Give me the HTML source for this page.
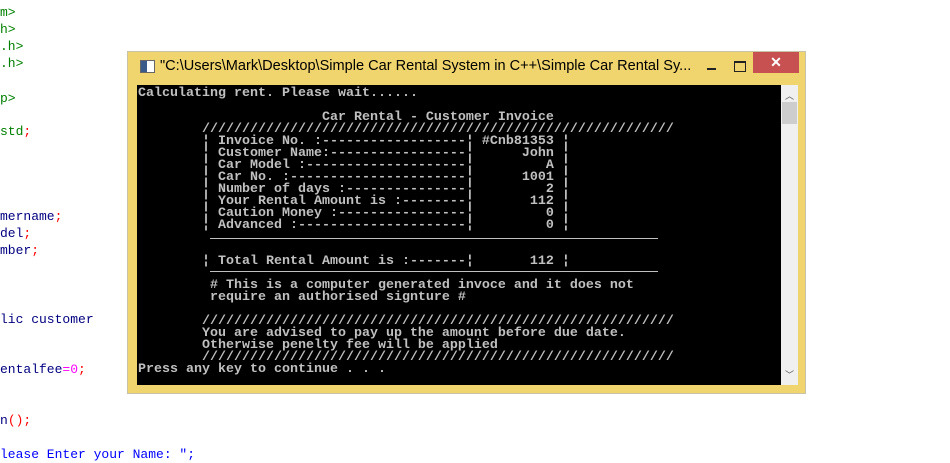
<!DOCTYPE html>
<html><head><meta charset="utf-8"><style>
body{margin:0;width:950px;height:460px;background:#fff;position:relative;overflow:hidden;font-family:"Liberation Mono",monospace}
.c{position:absolute;left:0;font-size:13px;line-height:17px;white-space:pre;color:#000080}
.g{color:#008000}.r{color:#ff0000}.m{color:#ff00ff}.b{color:#0000ff}
#win{position:absolute;left:128px;top:52px;width:677px;height:341px;background:#f0d46e;box-shadow:0 0 0 1px #c8c2a8}
#title{position:absolute;left:32px;top:5px;font-family:"Liberation Sans",sans-serif;font-size:15px;color:#000;white-space:nowrap;transform:scaleX(0.97);transform-origin:left}
#con{position:absolute;left:9px;top:33px;width:644px;height:300px;background:#000;overflow:hidden}
pre{margin:0;position:absolute;left:1px;top:3px;font-family:"Liberation Mono",monospace;font-size:13.33px;line-height:12px;color:#c0c0c0;font-weight:bold}
.hl{position:absolute;height:1px;background:#c0c0c0;left:73px;width:448px}
#sb{position:absolute;left:653px;top:33px;width:17px;height:300px;background:#f0f0f0}
</style></head><body>
<div class="c g" style="top:4px">m&gt;</div>
<div class="c g" style="top:21px">h&gt;</div>
<div class="c g" style="top:38px">.h&gt;</div>
<div class="c g" style="top:55px">.h&gt;</div>
<div class="c g" style="top:90px">p&gt;</div>
<div class="c" style="top:123px"><span class="g">std</span><span class="r">;</span></div>
<div class="c" style="top:208px">mername<span class="r">;</span></div>
<div class="c" style="top:225px">del<span class="r">;</span></div>
<div class="c" style="top:242px">mber<span class="r">;</span></div>
<div class="c" style="top:311px">lic customer</div>
<div class="c" style="top:361px">entalfee<span class="m">=0</span><span class="r">;</span></div>
<div class="c" style="top:412px">n<span class="r">();</span></div>
<div class="c b" style="top:446px">lease Enter your Name: ";</div>

<div id="win">
 <div style="position:absolute;left:12px;top:8px;width:15px;height:13px;background:#fff;border:1px solid #666;box-sizing:border-box"><div style="width:6px;height:11px;background:#3a5a8c"></div></div>
 <div id="title">"C:\Users\Mark\Desktop\Simple Car Rental System in C++\Simple Car Rental Sy...</div>
 <div style="position:absolute;left:579px;top:16px;width:9px;height:2px;background:#222"></div>
 <div style="position:absolute;left:606px;top:9px;width:10px;height:8px;border:1px solid #222;border-top-width:2px"></div>
 <div style="position:absolute;left:625px;top:0;width:46px;height:21px;background:#c75050;color:#fff;font-family:'Liberation Sans',sans-serif;font-size:14px;font-weight:bold;text-align:center;line-height:21px">✕</div>
 <div id="con">
<pre>Calculating rent. Please wait......

                       Car Rental - Customer Invoice
        ///////////////////////////////////////////////////////////
        ¦ Invoice No. :------------------¦ #Cnb81353 ¦
        ¦ Customer Name:-----------------¦      John ¦
        ¦ Car Model :--------------------¦         A ¦
        ¦ Car No. :----------------------¦      1001 ¦
        ¦ Number of days :---------------¦         2 ¦
        ¦ Your Rental Amount is :--------¦       112 ¦
        ¦ Caution Money :----------------¦         0 ¦
        ¦ Advanced :---------------------¦         0 ¦


        ¦ Total Rental Amount is :-------¦       112 ¦

         # This is a computer generated invoce and it does not
         require an authorised signture #

        ///////////////////////////////////////////////////////////
        You are advised to pay up the amount before due date.
        Otherwise penelty fee will be applied
        ///////////////////////////////////////////////////////////
Press any key to continue . . .</pre>
  <div class="hl" style="top:153px"></div>
  <div class="hl" style="top:186px"></div>
 </div>
 <div id="sb">
  <div style="position:absolute;left:0;top:4px;width:17px;text-align:center;font-size:9px;color:#555;font-family:'DejaVu Sans',sans-serif">︿</div>
  <div style="position:absolute;left:1px;top:17px;width:15px;height:22px;background:#cdcdcd"></div>
  <div style="position:absolute;left:0;top:283px;width:17px;text-align:center;font-size:9px;color:#555;font-family:'DejaVu Sans',sans-serif">﹀</div>
 </div>
</div>
</body></html>
